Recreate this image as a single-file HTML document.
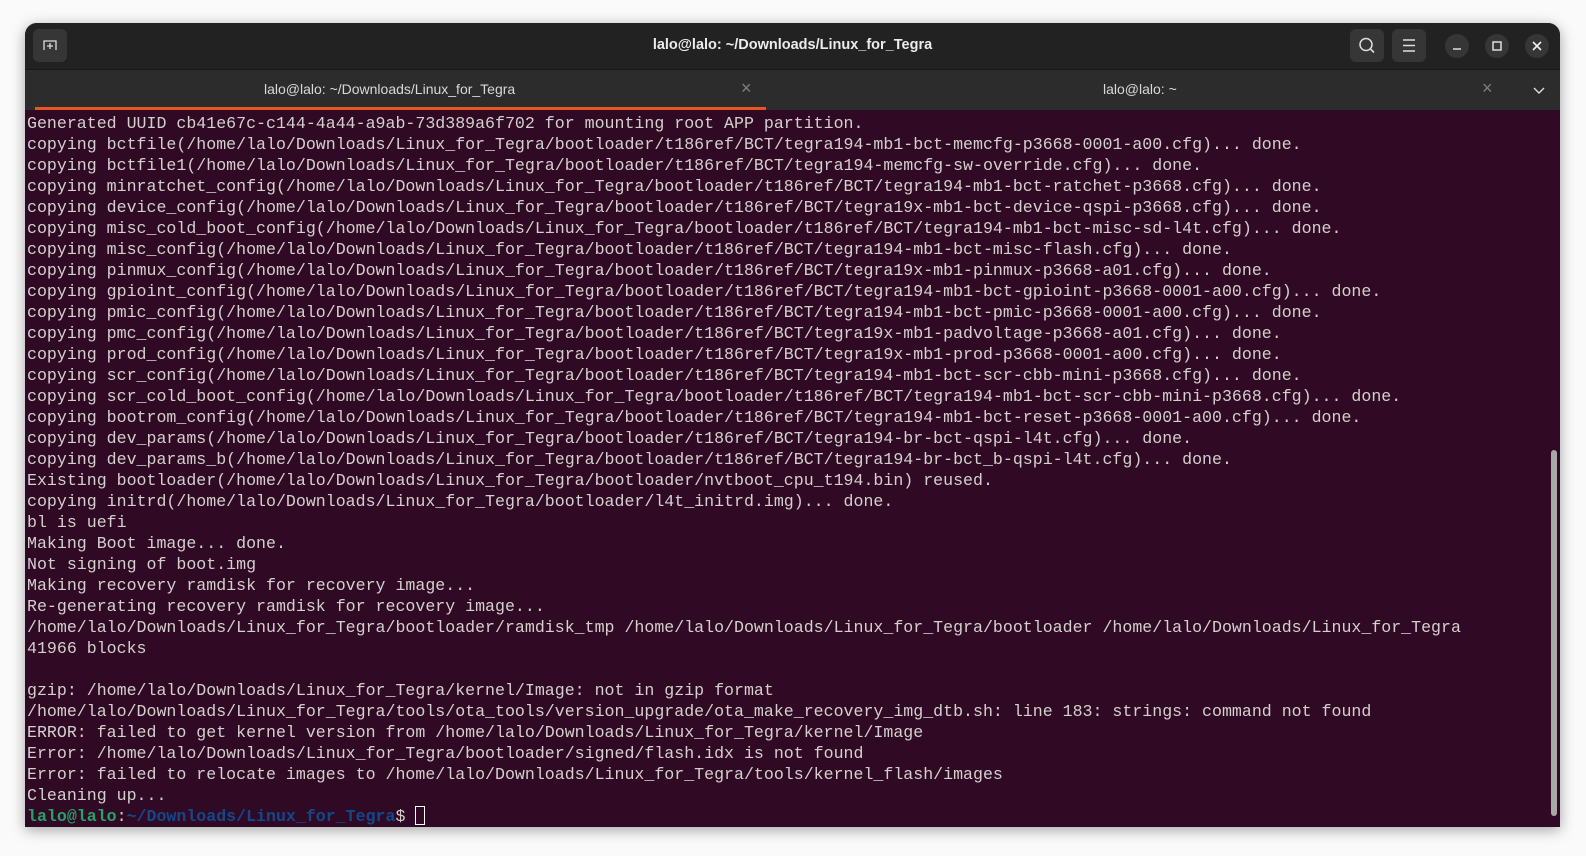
<!DOCTYPE html>
<html><head><meta charset="utf-8"><style>
body{margin:0;width:1586px;height:856px;background:#fafafa;position:relative;overflow:hidden;font-family:"Liberation Sans","DejaVu Sans",sans-serif}
.win{position:absolute;left:25px;top:23px;width:1535px;height:804px;background:#300a24;border-radius:12px 12px 0 0;overflow:hidden;box-shadow:0 3px 14px rgba(0,0,0,.35)}
.hdr{position:absolute;left:0;top:0;width:100%;height:46px;background:#222222;border-bottom:1px solid #181818}
.tabs{position:absolute;left:0;top:47px;width:100%;height:40px;background:#2c2c2c}
.btn{position:absolute;top:6px;width:34px;height:33px;background:#363636;border-radius:6px}
.circ{position:absolute;top:11px;width:24px;height:24px;border-radius:50%;background:#363636}
.title{position:absolute;left:0;width:100%;top:14px;text-align:center;color:#ececec;font-weight:bold;font-size:14.5px}
.tab{position:absolute;top:11px;color:#d8d8d8;font-size:14px}
.x{position:absolute;top:8px;color:#808080;font-size:18px}
.term{position:absolute;left:2px;top:90px;font-family:"Liberation Mono","DejaVu Sans Mono",monospace;font-size:16.6px;line-height:21px;color:#d3d0cd;white-space:pre}
.g{color:#26a269;font-weight:bold}.b{color:#12488b;font-weight:bold}
</style></head><body>
<div class="win">
<div class="hdr">
 <div class="btn" style="left:8px"><svg width="34" height="33"><path d="M11 21V12h12v9M17 14v6M14 17h6" stroke="#ddd" stroke-width="1.3" fill="none"/></svg></div>
 <div class="title">lalo@lalo: ~/Downloads/Linux_for_Tegra</div>
 <div class="btn" style="left:1325px"><svg width="34" height="33"><circle cx="16" cy="15.5" r="6" stroke="#ddd" stroke-width="1.5" fill="none"/><path d="M20.5 20l3.5 3.5" stroke="#ddd" stroke-width="1.6"/></svg></div>
 <div class="btn" style="left:1367px"><svg width="34" height="33"><path d="M11 11h12M11 16.5h12M11 22h12" stroke="#ddd" stroke-width="1.4"/></svg></div>
 <div class="circ" style="left:1420px"><svg width="24" height="24"><path d="M8 15h8" stroke="#ddd" stroke-width="1.5"/></svg></div>
 <div class="circ" style="left:1460px"><svg width="24" height="24"><rect x="8" y="8" width="8" height="8" stroke="#ddd" stroke-width="1.5" fill="none"/></svg></div>
 <div class="circ" style="left:1500px"><svg width="24" height="24"><path d="M8 8l8 8M16 8l-8 8" stroke="#eee" stroke-width="1.6"/></svg></div>
</div>
<div class="tabs">
 <div class="tab" style="left:239px">lalo@lalo: ~/Downloads/Linux_for_Tegra</div>
 <div class="x" style="left:716px">×</div>
 <div style="position:absolute;left:10px;top:37px;width:731px;height:3px;background:#e95420"></div>
 <div class="tab" style="left:1078px">lalo@lalo: ~</div>
 <div class="x" style="left:1457px">×</div>
 <svg style="position:absolute;left:1507px;top:14px" width="14" height="12"><path d="M2 4l5 5 5-5" stroke="#ddd" stroke-width="1.4" fill="none"/></svg>
</div>
<div style="position:absolute;left:1526px;top:427px;width:6px;height:366px;background:#a8a8a8;border-radius:3px"></div>
<div class="term">Generated UUID cb41e67c-c144-4a44-a9ab-73d389a6f702 for mounting root APP partition.
copying bctfile(/home/lalo/Downloads/Linux_for_Tegra/bootloader/t186ref/BCT/tegra194-mb1-bct-memcfg-p3668-0001-a00.cfg)... done.
copying bctfile1(/home/lalo/Downloads/Linux_for_Tegra/bootloader/t186ref/BCT/tegra194-memcfg-sw-override.cfg)... done.
copying minratchet_config(/home/lalo/Downloads/Linux_for_Tegra/bootloader/t186ref/BCT/tegra194-mb1-bct-ratchet-p3668.cfg)... done.
copying device_config(/home/lalo/Downloads/Linux_for_Tegra/bootloader/t186ref/BCT/tegra19x-mb1-bct-device-qspi-p3668.cfg)... done.
copying misc_cold_boot_config(/home/lalo/Downloads/Linux_for_Tegra/bootloader/t186ref/BCT/tegra194-mb1-bct-misc-sd-l4t.cfg)... done.
copying misc_config(/home/lalo/Downloads/Linux_for_Tegra/bootloader/t186ref/BCT/tegra194-mb1-bct-misc-flash.cfg)... done.
copying pinmux_config(/home/lalo/Downloads/Linux_for_Tegra/bootloader/t186ref/BCT/tegra19x-mb1-pinmux-p3668-a01.cfg)... done.
copying gpioint_config(/home/lalo/Downloads/Linux_for_Tegra/bootloader/t186ref/BCT/tegra194-mb1-bct-gpioint-p3668-0001-a00.cfg)... done.
copying pmic_config(/home/lalo/Downloads/Linux_for_Tegra/bootloader/t186ref/BCT/tegra194-mb1-bct-pmic-p3668-0001-a00.cfg)... done.
copying pmc_config(/home/lalo/Downloads/Linux_for_Tegra/bootloader/t186ref/BCT/tegra19x-mb1-padvoltage-p3668-a01.cfg)... done.
copying prod_config(/home/lalo/Downloads/Linux_for_Tegra/bootloader/t186ref/BCT/tegra19x-mb1-prod-p3668-0001-a00.cfg)... done.
copying scr_config(/home/lalo/Downloads/Linux_for_Tegra/bootloader/t186ref/BCT/tegra194-mb1-bct-scr-cbb-mini-p3668.cfg)... done.
copying scr_cold_boot_config(/home/lalo/Downloads/Linux_for_Tegra/bootloader/t186ref/BCT/tegra194-mb1-bct-scr-cbb-mini-p3668.cfg)... done.
copying bootrom_config(/home/lalo/Downloads/Linux_for_Tegra/bootloader/t186ref/BCT/tegra194-mb1-bct-reset-p3668-0001-a00.cfg)... done.
copying dev_params(/home/lalo/Downloads/Linux_for_Tegra/bootloader/t186ref/BCT/tegra194-br-bct-qspi-l4t.cfg)... done.
copying dev_params_b(/home/lalo/Downloads/Linux_for_Tegra/bootloader/t186ref/BCT/tegra194-br-bct_b-qspi-l4t.cfg)... done.
Existing bootloader(/home/lalo/Downloads/Linux_for_Tegra/bootloader/nvtboot_cpu_t194.bin) reused.
copying initrd(/home/lalo/Downloads/Linux_for_Tegra/bootloader/l4t_initrd.img)... done.
bl is uefi
Making Boot image... done.
Not signing of boot.img
Making recovery ramdisk for recovery image...
Re-generating recovery ramdisk for recovery image...
/home/lalo/Downloads/Linux_for_Tegra/bootloader/ramdisk_tmp /home/lalo/Downloads/Linux_for_Tegra/bootloader /home/lalo/Downloads/Linux_for_Tegra
41966 blocks

gzip: /home/lalo/Downloads/Linux_for_Tegra/kernel/Image: not in gzip format
/home/lalo/Downloads/Linux_for_Tegra/tools/ota_tools/version_upgrade/ota_make_recovery_img_dtb.sh: line 183: strings: command not found
ERROR: failed to get kernel version from /home/lalo/Downloads/Linux_for_Tegra/kernel/Image
Error: /home/lalo/Downloads/Linux_for_Tegra/bootloader/signed/flash.idx is not found
Error: failed to relocate images to /home/lalo/Downloads/Linux_for_Tegra/tools/kernel_flash/images
Cleaning up...
<span class="g">lalo@lalo</span>:<span class="b">~/Downloads/Linux_for_Tegra</span>$ <span style="display:inline-block;width:10px;height:19px;border:1px solid #fff;box-sizing:border-box;vertical-align:-4px"></span></div>
</div>
</body></html>
